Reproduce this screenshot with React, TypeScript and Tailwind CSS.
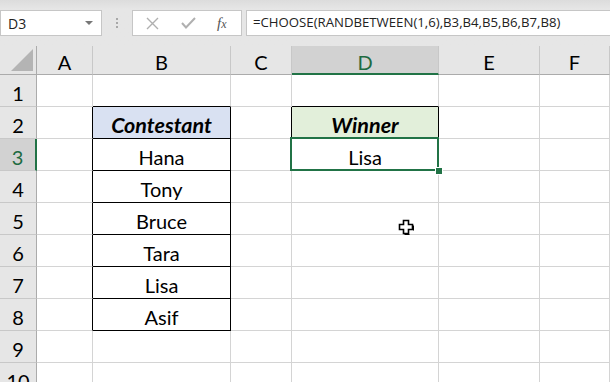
import React from "react";

const COLS = ["A", "B", "C", "D", "E", "F"];
const font = { fontFamily: "Lato, 'Open Sans', sans-serif" };

type CellProps = {
  r: number;
  c: number;
};

function Cell({ r, c }: CellProps) {
  const col = COLS[c];
  let cls = "h-[32px] border-r border-b border-[#d4d4d4] flex items-center justify-center pt-[5px] text-[20px] text-black relative";
  let content: React.ReactNode = null;
  if (col === "A" && r >= 2 && r <= 8) cls = cls.replace("border-r border-b border-[#d4d4d4]", "border-b border-b-[#d4d4d4] border-r border-r-black");
  if (col === "C" && r >= 2 && r <= 3) cls = cls.replace("border-r border-b border-[#d4d4d4]", "border-b border-b-[#d4d4d4] border-r border-r-black");
  if (col === "B" && r === 1) cls = cls.replace("border-r border-b border-[#d4d4d4]", "border-r border-r-[#d4d4d4] border-b border-b-black");
  if (col === "D" && r === 1) cls = cls.replace("border-r border-b border-[#d4d4d4]", "border-r border-r-[#d4d4d4] border-b border-b-black");
  if (col === "B" && r >= 2 && r <= 8) cls = cls.replace("border-r border-b border-[#d4d4d4]", "border-r border-b border-black");
  if (col === "D" && r >= 2 && r <= 3) cls = cls.replace("border-r border-b border-[#d4d4d4]", "border-r border-b border-black");
  const names: Record<number, string> = { 3: "Hana", 4: "Tony", 5: "Bruce", 6: "Tara", 7: "Lisa", 8: "Asif" };
  if (col === "B" && r === 2) {
    return <div className={cls + " bg-[#d9e1f2] font-bold italic text-[21.5px]"}>Contestant</div>;
  }
  if (col === "D" && r === 2) {
    return <div className={cls + " bg-[#e2efda] font-bold italic text-[21.5px]"}>Winner</div>;
  }
  if (col === "B" && names[r]) content = names[r];
  if (col === "D" && r === 3) {
    return (
      <div className={cls}>
        Lisa
        <div className="absolute z-10 -left-[2px] -top-[2px] -right-px -bottom-px border-2 border-[#217346]" />
        <div className="absolute z-20 -right-[5px] -bottom-[5px] w-[8px] h-[8px] bg-[#217346] border border-white" />
      </div>
    );
  }
  return <div className={cls}>{content}</div>;
}

export default function App() {
  const rows = [1, 2, 3, 4, 5, 6, 7, 8, 9, 10];
  return (
    <div className="w-[610px] h-[382px] overflow-hidden bg-white relative" style={font}>
      {/* Formula bar */}
      <div className="h-[46px] flex items-start pt-[10px] bg-gradient-to-b from-[#dcdcdc] to-[#e6e6e6] to-[20%]">
        <div className="w-[102px] h-[26px] bg-white border border-[#c6c6c6] flex items-center justify-between pl-[7px] pr-[8px] text-[14px] text-[#222]" style={{ fontFamily: "'Open Sans', sans-serif" }}>
          <span>D3</span>
          <svg width="8" height="5" viewBox="0 0 8 5"><path d="M0 0 L8 0 L4 4 Z" fill="#777" /></svg>
        </div>
        <div className="w-[30px] h-[26px] flex flex-col items-center justify-center gap-[2px]">
          <div className="w-[2px] h-[2px] bg-[#a8a8a8]" />
          <div className="w-[2px] h-[2px] bg-[#a8a8a8]" />
          <div className="w-[2px] h-[2px] bg-[#a8a8a8]" />
        </div>
        <div className="w-[110px] h-[26px] bg-white border border-[#c6c6c6] flex items-center">
          <svg className="ml-[13px]" width="13" height="13" viewBox="0 0 13 13"><path d="M1 1 L12 12 M12 1 L1 12" stroke="#b0b0b0" strokeWidth="1.4" /></svg>
          <svg className="ml-[22px]" width="15" height="12" viewBox="0 0 15 12"><path d="M1 6 L5 10.5 L14 1" stroke="#b0b0b0" strokeWidth="2" fill="none" /></svg>
          <span className="ml-[21px] italic text-[15px] text-[#555]" style={{ fontFamily: "'Liberation Serif', serif" }}>f<span className="text-[12px]">x</span></span>
        </div>
        <div className="w-[4px]" />
        <div className="flex-1 h-[26px] bg-white border border-[#c6c6c6] border-r-0 flex items-center pl-[6px] text-[13.2px] text-[#222]" style={{ fontFamily: "'Open Sans', sans-serif" }}>
          =CHOOSE(RANDBETWEEN(1,6),B3,B4,B5,B6,B7,B8)
        </div>
      </div>
      {/* Grid */}
      <div className="grid grid-cols-[37px_56px_138px_61px_147px_101px_1fr]">
        <div className="h-[29px] bg-[#e6e6e6] border-r border-b border-[#ababab] relative">
          <svg className="absolute right-[3px] bottom-[3px]" width="22" height="22" viewBox="0 0 22 22"><path d="M22 0 L22 22 L0 22 Z" fill="#b4b4b4" /></svg>
        </div>
        {COLS.map((c) => (
          <div
            key={c}
            className={
              "h-[29px] flex items-center justify-center pt-[4px] text-[20px] border-r border-[#c8c8c8] " +
              (c === "D"
                ? "bg-[#d2d2d2] text-[#1e6b41] border-b-2 border-b-[#217346]"
                : "bg-[#e6e6e6] text-black border-b border-b-[#ababab]")
            }
          >
            {c}
          </div>
        ))}
        {rows.map((r) => (
          <React.Fragment key={r}>
            <div
              className={
                "h-[32px] flex items-center justify-center pt-[5px] text-[20px] border-b border-b-[#c8c8c8] " +
                (r === 3
                  ? "bg-[#d2d2d2] text-[#1e6b41] border-r-2 border-r-[#217346]"
                  : "bg-[#e6e6e6] text-black border-r border-r-[#ababab]")
              }
            >
              {r}
            </div>
            {COLS.map((_, ci) => (
              <Cell key={ci} r={r} c={ci} />
            ))}
          </React.Fragment>
        ))}
      </div>
      <svg className="absolute left-[398px] top-[219px]" width="17" height="17" viewBox="0 0 17 17">
        <path d="M5.5 1.5 H10.5 V5.5 H14.5 V10.5 H10.5 V14.5 H5.5 V10.5 H1.5 V5.5 H5.5 Z" fill="white" stroke="black" strokeWidth="1.6" />
        <path d="M11.5 15.5 H6.5 M15.5 11.5 V6.5" stroke="black" strokeWidth="1" />
      </svg>
    </div>
  );
}
